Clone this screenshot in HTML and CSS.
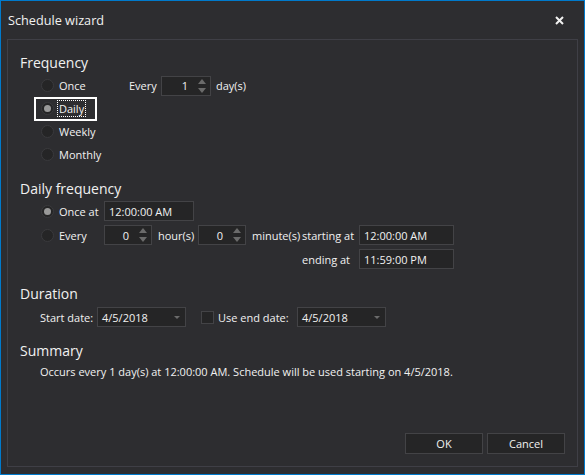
FILE: index.html
```html
<!DOCTYPE html>
<html>
<head>
<meta charset="utf-8">
<title>Schedule wizard</title>
<link rel="stylesheet" href="styles.css">
</head>
<body>
<div class="window">
  <div class="titlebar">
    <span class="title">Schedule wizard</span>
    <svg class="close" viewBox="0 0 9 9" width="9" height="9"><path d="M1 1 L8 8 M8 1 L1 8" stroke="#f1f1f1" stroke-width="2"/></svg>
  </div>
  <div class="panel">
    <h2 class="heading">Frequency</h2>
    <div class="freq-body">
      <div class="radio-list">
        <div class="ritem"><span class="radio"></span><span class="rlabel">Once</span></div>
        <div class="ritem focused"><span class="radio checked"></span><span class="rlabel">Daily</span></div>
        <div class="ritem"><span class="radio"></span><span class="rlabel">Weekly</span></div>
        <div class="ritem"><span class="radio"></span><span class="rlabel">Monthly</span></div>
      </div>
      <div class="every-day">
        <span class="cell w-every">Every</span>
        <div class="spinner w-50"><span class="sval">1</span><span class="sarrows"><svg viewBox="0 0 8 5" width="8" height="5"><path d="M4 0 L8 5 L0 5 Z" fill="#6b6b6b"/></svg><svg viewBox="0 0 8 5" width="8" height="5"><path d="M0 0 L8 0 L4 5 Z" fill="#6b6b6b"/></svg></span></div>
        <span class="after-spin">day(s)</span>
      </div>
    </div>

    <h2 class="heading">Daily frequency</h2>
    <div class="drow">
      <span class="radio checked"></span><span class="rlabel cell w-dlabel">Once at</span>
      <div class="textbox w-90">12:00:00 AM</div>
    </div>
    <div class="drow">
      <span class="radio"></span><span class="rlabel cell w-dlabel">Every</span>
      <div class="spinner w-48"><span class="sval">0</span><span class="sarrows"><svg viewBox="0 0 8 5" width="8" height="5"><path d="M4 0 L8 5 L0 5 Z" fill="#6b6b6b"/></svg><svg viewBox="0 0 8 5" width="8" height="5"><path d="M0 0 L8 0 L4 5 Z" fill="#6b6b6b"/></svg></span></div>
      <span class="cell w-hour">hour(s)</span>
      <div class="spinner w-48"><span class="sval">0</span><span class="sarrows"><svg viewBox="0 0 8 5" width="8" height="5"><path d="M4 0 L8 5 L0 5 Z" fill="#6b6b6b"/></svg><svg viewBox="0 0 8 5" width="8" height="5"><path d="M0 0 L8 0 L4 5 Z" fill="#6b6b6b"/></svg></span></div>
      <span class="cell w-min">minute(s)</span>
      <span class="cell w-at">starting at</span>
      <div class="textbox w-95">12:00:00 AM</div>
    </div>
    <div class="drow end">
      <span class="cell w-at">ending at</span>
      <div class="textbox w-95">11:59:00 PM</div>
    </div>

    <h2 class="heading">Duration</h2>
    <div class="durrow">
      <span class="cell w-start">Start date:</span>
      <div class="combo"><span>4/5/2018</span><svg viewBox="0 0 6 3" width="6" height="3"><path d="M0 0 L6 0 L3 3 Z" fill="#6b6b6b"/></svg></div>
      <span class="checkbox"></span>
      <span class="cell w-end">Use end date:</span>
      <div class="combo"><span>4/5/2018</span><svg viewBox="0 0 6 3" width="6" height="3"><path d="M0 0 L6 0 L3 3 Z" fill="#6b6b6b"/></svg></div>
    </div>

    <h2 class="heading">Summary</h2>
    <div class="summary">Occurs every 1 day(s) at 12:00:00 AM. Schedule will be used starting on 4/5/2018.</div>

    <div class="buttons">
      <button class="btn">OK</button>
      <button class="btn">Cancel</button>
    </div>
  </div>
</div>
</body>
</html>
```

FILE: styles.css
```css
html, body {
  margin: 0;
  padding: 0;
  background: #2d2d30;
}
body {
  font-family: "Open Sans", "Noto Sans", sans-serif;
  font-size: 11px;
  color: #f1f1f1;
}
.window {
  width: 585px;
  height: 475px;
  box-sizing: border-box;
  border: 1px solid #007acc;
  background: #2d2d30;
  display: flex;
  flex-direction: column;
}
.titlebar {
  height: 38px;
  flex: none;
  display: flex;
  align-items: center;
  justify-content: space-between;
  padding: 0 20px 0 7px;
}
.title {
  font-size: 12.7px;
}
.close {
  display: block;
}
.panel {
  flex: 1;
  margin: 0 6px 7px 6px;
  border: 1px solid #3f3f46;
  display: flex;
  flex-direction: column;
  padding: 13px 12px 12px 12px;
}
.heading {
  margin: 0;
  font-weight: normal;
  font-size: 14px;
  line-height: 20px;
  height: 20px;
}
.freq-body {
  display: flex;
  margin-top: 1px;
  margin-left: 14px;
  margin-bottom: 13px;
}
.radio-list {
  width: 95px;
  display: flex;
  flex-direction: column;
}
.ritem {
  height: 23px;
  display: flex;
  align-items: center;
}
.ritem > .radio {
  margin-left: 7px;
}
.ritem.focused {
  align-self: flex-start;
  height: 24px;
  margin: -0.5px 0;
  box-sizing: border-box;
  border: 2px solid #ffffff;
  padding: 0 9px 0 5px;
}
.ritem.focused > .radio {
  margin-left: 0;
}
.ritem.focused .rlabel {
  border: 1px dotted #ffffff;
  height: 17px;
  box-sizing: border-box;
  line-height: 15px;
}
.radio {
  width: 13px;
  height: 13px;
  box-sizing: border-box;
  border-radius: 50%;
  background: #252526;
  border: 1px solid #3a3a3d;
  flex: none;
  margin-right: 3px;
  display: flex;
  align-items: center;
  justify-content: center;
}
.radio.checked::after {
  content: "";
  width: 7px;
  height: 7px;
  border-radius: 50%;
  background: #999999;
}
.rlabel {
  border: 1px solid transparent;
  padding: 0 1px;
}
.every-day {
  height: 23px;
  display: flex;
  align-items: center;
}
.cell {
  flex: none;
  box-sizing: border-box;
  white-space: nowrap;
}
.w-every { width: 32px; }
.spinner {
  height: 20px;
  box-sizing: border-box;
  border: 1px solid #434346;
  background: #252526;
  display: flex;
  align-items: center;
  flex: none;
}
.w-50 { width: 50px; }
.w-48 { width: 48px; }
.sval {
  flex: 1;
  text-align: right;
  padding-right: 7px;
}
.sarrows {
  width: 14px;
  display: flex;
  flex-direction: column;
  align-items: center;
  gap: 4px;
  margin-right: 1px;
}
.sarrows svg {
  display: block;
}
.after-spin {
  margin-left: 5px;
}
.drow {
  height: 24px;
  display: flex;
  align-items: center;
  padding-left: 21px;
}
.drow.end {
  padding-left: 282px;
}
.w-dlabel { width: 47px; }
.textbox {
  height: 20px;
  box-sizing: border-box;
  border: 1px solid #434346;
  background: #252526;
  padding-left: 4px;
  display: flex;
  align-items: center;
  flex: none;
}
.w-90 { width: 90px; }
.w-95 { width: 95px; }
.w-hour { width: 46px; padding-left: 6px; }
.w-min { width: 56px; padding-left: 6px; }
.w-at { width: 57px; }
.drow.end + .heading {
  margin-top: 13px;
}
.durrow {
  height: 24px;
  margin-top: 1px;
  display: flex;
  align-items: center;
  padding-left: 20px;
  margin-bottom: 12px;
}
.w-start { width: 57px; }
.w-end { width: 79px; }
.combo {
  width: 89px;
  height: 20px;
  box-sizing: border-box;
  border: 1px solid #434346;
  background: #252526;
  display: flex;
  align-items: center;
  justify-content: space-between;
  padding: 0 5px 0 4px;
  flex: none;
}
.combo svg {
  display: block;
}
.checkbox {
  width: 13px;
  height: 13px;
  box-sizing: border-box;
  border: 1px solid #434346;
  background: #252526;
  margin-left: 15px;
  margin-right: 4px;
  flex: none;
}
.summary {
  height: 22px;
  line-height: 22px;
  padding-left: 20px;
  white-space: nowrap;
}
.buttons {
  margin-top: auto;
  display: flex;
  justify-content: flex-end;
  gap: 4px;
}
.btn {
  width: 78px;
  height: 21px;
  box-sizing: border-box;
  border: 1px solid #434346;
  background: #252526;
  color: #f1f1f1;
  font-family: "Open Sans", "Noto Sans", sans-serif;
  font-size: 11px;
  padding: 0;
  line-height: 19px;
}
```
